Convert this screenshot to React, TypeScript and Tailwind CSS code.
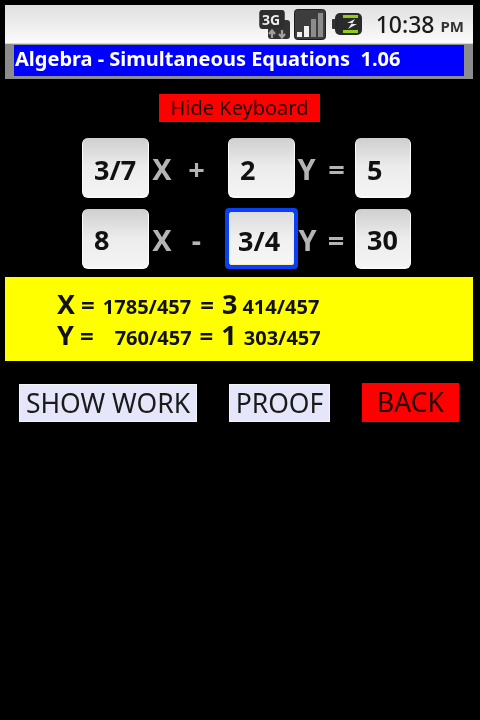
import React from "react";

function Field({ value, focused = false, w = "w-[67px]" }: { value: string; focused?: boolean; w?: string }) {
  if (focused) {
    return (
      <div className="w-[73px] h-[61px] rounded-[4px] border-[4px] border-[#0a40f5] flex items-center">
        <div className="w-full h-full rounded-[2px] bg-gradient-to-b from-[#dcdcdc] via-[#f0f0f0] to-[#f6f6f6] border-b border-x border-[#f8edb8] flex items-center pl-[8px] pt-[6px] text-[27px] font-bold text-[#111]">
          {value}
        </div>
      </div>
    );
  }
  return (
    <div className={`${w} h-[60px] rounded-[6px] bg-gradient-to-b from-[#cfcfcf] via-[#ececec] to-[#f4f4f4] border-b-2 border-x border-[#fafafa] flex items-center pl-[11px] pt-[6px] text-[27px] font-bold text-[#111]`}>
      {value}
    </div>
  );
}

function Label({ children, w }: { children: React.ReactNode; w: string }) {
  return <div className={`${w} pt-[1px] text-center text-[29px] leading-none font-bold text-[#b4b4b4]`}>{children}</div>;
}

function StatusIcons() {
  return (
    <div className="flex items-center">
      <svg width="32" height="31" viewBox="0 0 32 31" className="mr-[3px]">
        <rect x="0.500" y="1" width="25" height="19" rx="3" fill="#2e2e2e" />
        <rect x="9" y="11" width="22" height="19" rx="3" fill="#333" />
        <rect x="0.500" y="1" width="25" height="18" rx="3" fill="#2e2e2e" />
        <text x="3" y="15.500" fontSize="14" fontWeight="700" fill="#eee" fontFamily="Noto Sans">3G</text>
        <path d="M13 29v-7M10 25l3-3.500 3 3.500" stroke="#a0a0a0" strokeWidth="2.200" fill="none" />
        <path d="M23 21v7M20 25l3 3.500 3-3.500" stroke="#a0a0a0" strokeWidth="2.200" fill="none" />
      </svg>
      <svg width="32" height="31" viewBox="0 0 32 31" className="mr-[6px]">
        <rect x="0.500" y="0.500" width="31" height="30" rx="3" fill="#3d3d3d" stroke="#1e1e1e" />
        <rect x="3" y="23" width="5" height="5" fill="#f0f0f0" />
        <rect x="10" y="17" width="5" height="11" fill="#f0f0f0" />
        <rect x="17" y="10" width="5" height="18" fill="#8c8c8c" />
        <rect x="24" y="4" width="5" height="24" fill="#8c8c8c" />
      </svg>
      <svg width="30" height="24" viewBox="0 0 30 24" className="mr-[14px]">
        <rect x="0" y="7" width="4" height="10" rx="1" fill="#333" />
        <rect x="3" y="1" width="27" height="22" rx="5" fill="#2a2a2a" />
        <rect x="11" y="3" width="15" height="3" fill="#8fd11a" />
        <rect x="11" y="18" width="15" height="3" fill="#8fd11a" />
        <path d="M23 7l-8 4h5l-4 6 9-5h-5l3-5z" fill="#e8e8e8" />
      </svg>
    </div>
  );
}

export default function App() {
  return (
    <div className="w-[480px] h-[720px] bg-black pt-[5px] overflow-hidden [font-family:'Noto_Sans',sans-serif] blur-[0.4px]">
      <div className="mx-[5px] w-[468px]">
        <div className="h-[38px] bg-gradient-to-b from-[#e0e0e0] to-[#fbfbfb] flex items-center justify-end pr-[9px]">
          <StatusIcons />
          <span className="text-[23px] leading-none font-medium text-[#1a1a1a]">10:38</span>
          <span className="ml-[6px] mt-[5px] text-[15px] leading-none font-bold text-[#333]">PM</span>
        </div>
        <div className="h-[36px] bg-[#8c8c8c] px-[9px] pt-px pb-[3px] border-t border-[#d8d8c8]">
          <div className="h-full bg-[#0000ff] text-white text-[20px] font-bold leading-[28px] whitespace-pre pl-px">Algebra - Simultaneous Equations  1.06</div>
        </div>
      </div>

      <div className="flex justify-center ml-[-1px] mt-[15px]">
        <div className="w-[161px] h-[28px] bg-[#ff0000] text-[#200000] text-[20px] leading-[28px] text-center">Hide Keyboard</div>
      </div>

      <div className="mt-[16px] ml-[82px] flex items-center">
        <Field value="3/7" />
        <Label w="w-[26px]">X</Label>
        <Label w="w-[43px]">+</Label>
        <div className="ml-[10px]"><Field value="2" /></div>
        <Label w="w-[23px]">Y</Label>
        <Label w="w-[37px]">=</Label>
        <Field value="5" w="w-[56px]" />
      </div>
      <div className="mt-[10px] ml-[82px] flex items-center">
        <Field value="8" />
        <Label w="w-[26px]">X</Label>
        <Label w="w-[43px]">-</Label>
        <div className="ml-[7px]"><Field value="3/4" focused /></div>
        <Label w="w-[19px]">Y</Label>
        <Label w="w-[38px]">=</Label>
        <Field value="30" w="w-[56px]" />
      </div>

      <div className="mt-[8px] ml-[5px] w-[468px] h-[84px] bg-[#ffff00] pl-[52px] pt-[11px] text-[#111] font-bold">
        <div className="h-[31px] flex items-baseline whitespace-pre text-[20px] leading-[31px]">
          <span className="text-[27px]">X</span>
          <span className="text-[24px] ml-[6px]">=</span>
          <span className="ml-[8px]">1785/457</span>
          <span className="text-[24px] ml-[9px]">=</span>
          <span className="text-[27px] ml-[8px]">3</span>
          <span className="ml-[5px]">414/457</span>
        </div>
        <div className="h-[31px] flex items-baseline whitespace-pre text-[20px] leading-[31px]">
          <span className="text-[27px]">Y</span>
          <span className="text-[24px] ml-[6px]">=</span>
          <span className="ml-[21px]">760/457</span>
          <span className="text-[24px] ml-[8px]">=</span>
          <span className="text-[27px] ml-[8px]">1</span>
          <span className="ml-[7px]">303/457</span>
        </div>
      </div>

      <div className="mt-[22px] ml-[19px] flex items-start text-[26.500px] text-[#1a1a1a]">
        <div className="mt-px w-[178px] h-[38px] bg-[#e6e6fa] border border-[#f4f4f4] leading-[36px] text-center">SHOW WORK</div>
        <div className="mt-px ml-[32px] w-[101px] h-[38px] bg-[#e6e6fa] border border-[#f4f4f4] leading-[36px] text-center">PROOF</div>
        <div className="ml-[32px] w-[97px] h-[39px] bg-[#ff0000] leading-[39px] text-center text-[#200000]">BACK</div>
      </div>
    </div>
  );
}
